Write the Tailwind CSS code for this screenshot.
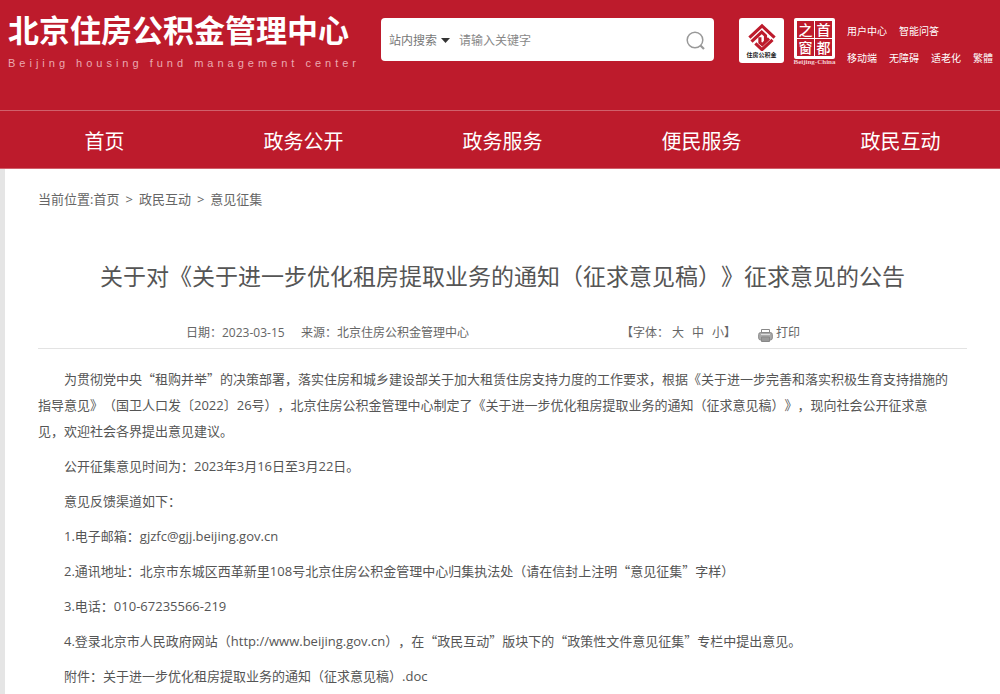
<!DOCTYPE html>
<html lang="zh-CN">
<head>
    <meta charset="UTF-8">
    <meta name="viewport" content="width=device-width, initial-scale=1.0">
    <title>北京住房公积金管理中心</title>
    <script src="https://cdn.jsdelivr.net/npm/@tailwindcss/browser@4"></script>
</head>
<body class="min-h-screen bg-white font-['Open_Sans','Noto_Sans_CJK_SC',sans-serif] text-[#666] [text-spacing-trim:space-all]">
    <!-- Header -->
    <header class="bg-[#bd1b2c] text-white">
        <div class="flex h-[110px] items-start pl-2 pr-[7px]">
            <a href="#" class="block w-[373px] shrink-0 pt-2">
                <span class="block whitespace-nowrap text-[31px] font-bold leading-[44px]">北京住房公积金管理中心</span>
                <span class="block whitespace-nowrap font-['Liberation_Sans',sans-serif] text-[11px] leading-[22px] tracking-[4px] text-[#eba9b0]">Beijing housing fund management center</span>
            </a>

            <!-- Search -->
            <form class="mt-[18px] flex h-[43px] min-w-0 flex-1 items-center rounded-[4px] bg-white px-2 pt-[2px] text-[12px] text-[#777]">
                <div class="relative shrink-0">
                    <select aria-label="搜索范围" class="w-[70px] appearance-none bg-transparent outline-none">
                        <option>站内搜索</option>
                    </select>
                    <svg class="pointer-events-none absolute right-[9px] top-[6px] h-[5px] w-[9px]" viewBox="0 0 9 5" fill="#333"><path d="M0 0h9L4.5 5z"/></svg>
                </div>
                <input type="text" aria-label="关键字" placeholder="请输入关键字" class="min-w-0 flex-1 outline-none placeholder:text-[#888]">
                <button type="button" aria-label="搜索" class="shrink-0">
                    <svg class="h-[20px] w-[20px]" viewBox="0 0 20 20" fill="none" stroke="#999" stroke-width="1.5"><circle cx="9" cy="9" r="7.8"/><path d="M14.5 14.5L18 18" stroke-width="2.2"/></svg>
                </button>
            </form>

            <!-- Logos -->
            <a href="#" class="ml-[25px] mt-[18px] flex h-[45px] w-[45px] shrink-0 flex-col items-center rounded-[3px] bg-white pt-[5px] text-[#222]">
                <svg class="h-[28px] w-[28px]" viewBox="0 0 80 80" fill="none" stroke="#bd1b2c" stroke-width="9">
                    <path d="M4 42L40 8l36 34"/>
                    <path d="M10 53l29-27 11 10v18"/>
                    <path d="M70 48L40 76 21 58"/>
                    <path d="M34 41v15l7 6 19-18"/>
                </svg>
                <span class="whitespace-nowrap text-[6px] font-bold leading-[8px]">住房公积金</span>
            </a>
            <a href="#" class="ml-2 mt-[18px] flex w-[45px] shrink-0 flex-col items-center">
                <span class="grid h-[41px] w-[41px] grid-cols-2 gap-px rounded-[2px] bg-white p-[3px] text-[14px] font-medium leading-[17px]">
                    <span class="bg-[#bd1b2c] text-center">之</span>
                    <span class="bg-[#bd1b2c] text-center">首</span>
                    <span class="bg-[#bd1b2c] text-center">窗</span>
                    <span class="bg-[#bd1b2c] text-center">都</span>
                </span>
                <span class="whitespace-nowrap font-['Liberation_Serif',serif] text-[7px] font-bold leading-[7px] text-[#f3cdd1]">Beijing-China</span>
            </a>

            <div class="ml-[10px] shrink-0 pt-[22px] text-[10px] leading-[18px]">
                <div class="flex gap-3">
                    <a href="#">用户中心</a>
                    <a href="#">智能问答</a>
                </div>
                <div class="mt-[9px] flex gap-3">
                    <a href="#">移动端</a>
                    <a href="#">无障碍</a>
                    <a href="#">适老化</a>
                    <a href="#">繁體</a>
                </div>
            </div>
        </div>

        <!-- Navigation -->
        <nav class="grid h-[59px] grid-cols-5 items-center border-y border-[#d0606b] pl-[5px] pt-1 text-center text-[20px]">
            <a href="#">首页</a>
            <a href="#">政务公开</a>
            <a href="#">政务服务</a>
            <a href="#">便民服务</a>
            <a href="#">政民互动</a>
        </nav>
    </header>

    <main class="border-l-[5px] border-[#e5e5e5] pl-[33px] pr-[33px] pt-[20px]">
        <div class="flex gap-[6px] text-[13px] leading-[20px]">
            <span>当前位置:<a href="#">首页</a></span>
            <span>&gt;</span>
            <a href="#">政民互动</a>
            <span>&gt;</span>
            <a href="#">意见征集</a>
        </div>

        <h1 class="mt-[49px] whitespace-nowrap text-center text-[23px] leading-[36px] text-[#555]">关于对《关于进一步优化租房提取业务的通知（征求意见稿）》征求意见的公告</h1>

        <div class="mt-[29px] flex border-b border-[#e3e3e3] pb-[5px] pl-[148px] text-[12px] leading-[20px]">
            <span class="w-[115px]">日期：2023-03-15</span>
            <span>来源：北京住房公积金管理中心</span>
            <div class="ml-auto flex gap-2 pr-[22px]">
                <span>【字体：<button type="button" class="ml-[3px]">大</button></span>
                <button type="button">中</button>
                <span><button type="button">小</button>】</span>
            </div>
            <button type="button" class="mr-[167px] flex items-center gap-[3px]">
                <svg class="mt-1 h-[15px] w-[15px]" viewBox="0 0 15 15" fill="none" stroke="#888"><path d="M3.500 5V1.500h8V5"/><rect x=".7" y="4.500" width="13.600" height="7.500" rx="2" fill="#aaa"/><path d="M3 6.500h9" stroke="#ddd"/><path d="M3.500 9h8v4.500h-8z" fill="#999"/></svg>
                打印
            </button>
        </div>

        <!-- Article -->
        <article class="space-y-[9px] pb-4 pr-4 pt-[17px] text-[13px] leading-[26px] text-[#555]">
            <p class="indent-[26px]">为贯彻党中央<span class="font-['Noto_Sans_CJK_SC',sans-serif]">“</span>租购并举<span class="font-['Noto_Sans_CJK_SC',sans-serif]">”</span>的决策部署，落实住房和城乡建设部关于加大租赁住房支持力度的工作要求，根据《关于进一步完善和落实积极生育支持措施的指导意见》（国卫人口发〔2022〕26号），北京住房公积金管理中心制定了《关于进一步优化租房提取业务的通知（征求意见稿）》，现向社会公开征求意见，欢迎社会各界提出意见建议。</p>
            <p class="indent-[26px]">公开征集意见时间为：2023年3月16日至3月22日。</p>
            <p class="indent-[26px]">意见反馈渠道如下：</p>
            <p class="indent-[26px]">1.电子邮箱：gjzfc@gjj.beijing.gov.cn</p>
            <p class="indent-[26px]">2.通讯地址：北京市东城区西革新里108号北京住房公积金管理中心归集执法处（请在信封上注明<span class="font-['Noto_Sans_CJK_SC',sans-serif]">“</span>意见征集<span class="font-['Noto_Sans_CJK_SC',sans-serif]">”</span>字样）</p>
            <p class="indent-[26px]">3.电话：010-67235566-219</p>
            <p class="indent-[26px]">4.登录北京市人民政府网站（http://www.beijing.gov.cn），在<span class="font-['Noto_Sans_CJK_SC',sans-serif]">“</span>政民互动<span class="font-['Noto_Sans_CJK_SC',sans-serif]">”</span>版块下的<span class="font-['Noto_Sans_CJK_SC',sans-serif]">“</span>政策性文件意见征集<span class="font-['Noto_Sans_CJK_SC',sans-serif]">”</span>专栏中提出意见。</p>
            <p class="indent-[26px]">附件：<a href="#">关于进一步优化租房提取业务的通知（征求意见稿）.doc</a></p>
        </article>
    </main>
</body>
</html>
